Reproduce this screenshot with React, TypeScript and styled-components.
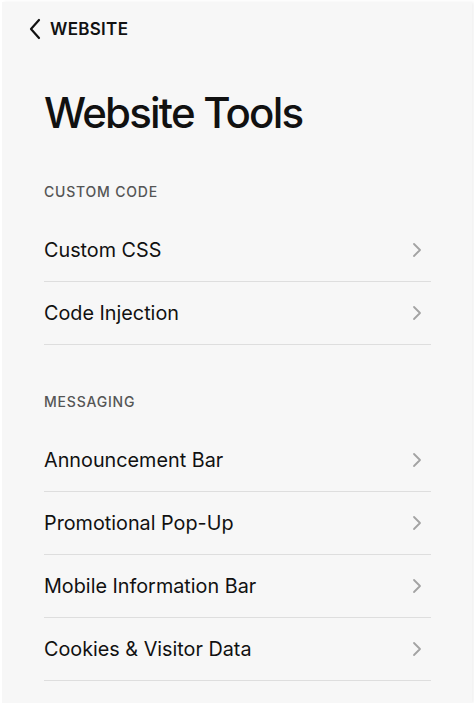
import styled, { createGlobalStyle } from 'styled-components';

const GlobalStyle = createGlobalStyle`
  html, body {
    margin: 0;
    padding: 0;
    background: #ffffff;
  }
  body {
    font-family: Inter, "Liberation Sans", sans-serif;
    color: #111111;
    -webkit-font-smoothing: antialiased;
  }
`;

const sections = [
  { title: 'Custom Code', items: ['Custom CSS', 'Code Injection'] },
  {
    title: 'Messaging',
    items: ['Announcement Bar', 'Promotional Pop-Up', 'Mobile Information Bar', 'Cookies & Visitor Data'],
  },
];

function ChevronLeft() {
  return (
    <svg width="14" height="22" viewBox="0 0 14 22" fill="none">
      <path d="M11 2 L3 11 L11 20" stroke="#111" strokeWidth="2.2" strokeLinecap="round" strokeLinejoin="round" />
    </svg>
  );
}

function ChevronRight() {
  return (
    <svg width="10" height="16" viewBox="0 0 10 16" fill="none">
      <path d="M2 2 L8 8 L2 14" stroke="#a3a3a3" strokeWidth="1.8" strokeLinecap="round" strokeLinejoin="round" />
    </svg>
  );
}

export default function App() {
  return (
    <>
      <GlobalStyle />
      <S.Panel>
        <S.BackLink>
          <ChevronLeft />
          <S.BackLabel>Website</S.BackLabel>
        </S.BackLink>
        <S.Title>Website Tools</S.Title>
        {sections.map(({ title, items }) => (
          <S.Section key={title}>
            <S.SectionTitle>{title}</S.SectionTitle>
            <S.List>
              {items.map((item) => (
                <S.Row key={item}>
                  <S.RowLabel>{item}</S.RowLabel>
                  <ChevronRight />
                </S.Row>
              ))}
            </S.List>
          </S.Section>
        ))}
      </S.Panel>
    </>
  );
}

const S = {
  Panel: styled.div`
    width: 470px;
    height: 701px;
    margin: 2px 0 0 2px;
    background: #f7f7f7;
    box-shadow: 2px 0 3px rgba(0, 0, 0, 0.06);
    padding: 16px 41px 0 42px;
    box-sizing: border-box;
    overflow: hidden;
  `,

  BackLink: styled.div`
    display: flex;
    align-items: center;
    gap: 8px;
    height: 22px;
    margin-left: -16px;
  `,

  BackLabel: styled.span`
    font-size: 17px;
    font-weight: 600;
    letter-spacing: 0.3px;
    text-transform: uppercase;
  `,

  Title: styled.h1`
    margin: 48px 0 0;
    font-size: 42px;
    line-height: 50px;
    font-weight: 500;
    letter-spacing: -1.8px;
  `,

  Section: styled.section`
    margin-top: 45px;

    & + & {
      margin-top: 48px;
    }
  `,

  SectionTitle: styled.h2`
    margin: 0 0 18px;
    font-size: 14px;
    line-height: 18px;
    font-weight: 500;
    letter-spacing: 0.8px;
    text-transform: uppercase;
    color: #555555;
  `,

  List: styled.div`
    display: flex;
    flex-direction: column;
  `,

  Row: styled.div`
    display: flex;
    align-items: center;
    justify-content: space-between;
    height: 62px;
    border-bottom: 1px solid #dedede;
    padding-right: 9px;
  `,

  RowLabel: styled.span`
    font-size: 19.8px;
    font-weight: 400;
    color: #111111;
  `,
};
